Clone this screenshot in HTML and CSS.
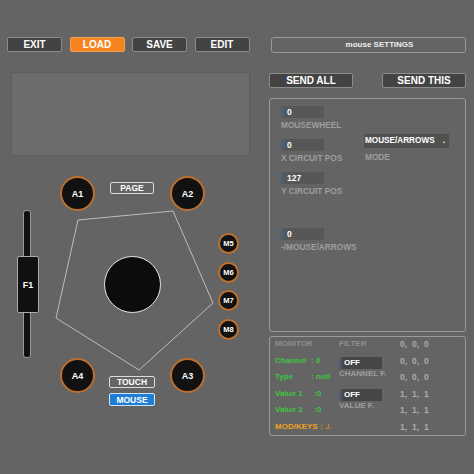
FILE: index.html
```html
<!DOCTYPE html>
<html>
<head>
<meta charset="utf-8">
<link rel="stylesheet" href="styles.css">
</head>
<body>
<div class="page">
  <div class="toolbar">
    <div class="tbtn">EXIT</div>
    <div class="tbtn active">LOAD</div>
    <div class="tbtn">SAVE</div>
    <div class="tbtn">EDIT</div>
  </div>
  <div class="title-box">mouse SETTiNGS</div>

  <div class="left">
    <div class="display"></div>
    <div class="pad">
      <svg class="shape" width="243" height="260" viewBox="0 0 243 260">
        <polygon points="71,65 166,56 206,148 132,215 49,163" fill="none" stroke="#bdbdbd" stroke-width="1"/>
      </svg>
      <div class="track"></div>
      <div class="cap">F1</div>
      <div class="knob a1">A1</div>
      <div class="knob a2">A2</div>
      <div class="knob a4">A4</div>
      <div class="knob a3">A3</div>
      <div class="pill page-btn">PAGE</div>
      <div class="pill touch-btn">TOUCH</div>
      <div class="pill blue mouse-btn">MOUSE</div>
      <div class="stick"></div>
      <div class="mini m5">M5</div>
      <div class="mini m6">M6</div>
      <div class="mini m7">M7</div>
      <div class="mini m8">M8</div>
    </div>
  </div>

  <div class="right">
    <div class="send-row">
      <div class="sbtn">SEND ALL</div>
      <div class="sbtn">SEND THIS</div>
    </div>
    <div class="params">
      <div class="fields">
        <div class="field"><div class="num">0</div><div class="lbl">MOUSEWHEEL</div></div>
        <div class="field"><div class="num">0</div><div class="lbl">X CIRCUIT POS</div></div>
        <div class="field"><div class="num">127</div><div class="lbl">Y CIRCUIT POS</div></div>
        <div class="field far"><div class="num">0</div><div class="lbl">-/MOUSE/ARROWS</div></div>
      </div>
      <div class="mode">
        <div class="select"><span>MOUSE/ARROWS</span><span>.</span></div>
        <div class="lbl">MODE</div>
      </div>
    </div>
    <div class="monitor">
      <div class="mcol">
        <div class="head">MONITOR</div>
        <div class="green"><span class="nm">Channel</span>: 0</div>
        <div class="green"><span class="nm">Type</span>: null</div>
        <div class="green"><span class="nm wide">Value 1</span>:0</div>
        <div class="green"><span class="nm wide">Value 2</span>:0</div>
        <div class="orange">MOD/KEYS <span class="dim">: ./.</span></div>
      </div>
      <div class="fcol">
        <div class="head">FILTER</div>
        <div class="off">OFF</div>
        <div class="flbl">CHANNEL F.</div>
        <div class="off second">OFF</div>
        <div class="flbl">VALUE F.</div>
      </div>
      <div class="vcol">
        <div>0, 0, 0</div>
        <div>0, 0, 0</div>
        <div>0, 0, 0</div>
        <div>1, 1, 1</div>
        <div>1, 1, 1</div>
        <div>1, 1, 1</div>
      </div>
    </div>
  </div>
</div>
</body>
</html>
```
FILE: styles.css
```css
html, body {
  margin: 0;
  padding: 0;
}
body {
  background: #646464;
  font-family: "Liberation Sans", Arial, sans-serif;
  font-weight: bold;
  width: 474px;
  height: 474px;
  overflow: hidden;
}
.page {
  display: grid;
  grid-template-columns: 243px 196px;
  column-gap: 20px;
  padding: 37px 0 0 7px;
}
.toolbar {
  display: flex;
  gap: 7.5px;
}
.tbtn {
  width: 55px;
  height: 15px;
  box-sizing: border-box;
  background: #434343;
  border: 1px solid #8c8c8c;
  border-radius: 2px;
  color: #fff;
  font-size: 10px;
  line-height: 13px;
  text-align: center;
}
.tbtn.active {
  background: #f5841f;
  border-color: #f5a25a;
}
.title-box {
  height: 16px;
  box-sizing: border-box;
  border: 1px solid #9a9a9a;
  border-radius: 3px;
  color: #eee;
  font-size: 8px;
  line-height: 14px;
  text-align: center;
  margin-left: 1px;
  padding-left: 22px;
}

/* left side */
.left {
  padding-top: 20px;
}
.display {
  margin-left: 5px;
  width: 237px;
  height: 82px;
  background: #6c6c6c;
  box-shadow: 0 0 0 1px #5d5d5d;
}
.pad {
  position: relative;
  height: 260px;
}
.shape {
  position: absolute;
  left: 0;
  top: 0;
}
.track {
  position: absolute;
  left: 16px;
  top: 55px;
  width: 8px;
  height: 148px;
  box-sizing: border-box;
  background: #111;
  border: 1px solid #9a9a9a;
  border-radius: 3px;
}
.cap {
  position: absolute;
  left: 10px;
  top: 101px;
  width: 22px;
  height: 57px;
  box-sizing: border-box;
  background: #111;
  border: 1px solid #aaa;
  border-radius: 2px;
  color: #fff;
  font-size: 9px;
  display: flex;
  align-items: center;
  justify-content: center;
}
.knob, .mini {
  position: absolute;
  box-sizing: border-box;
  border-radius: 50%;
  background: #111;
  border: 2px solid #bd6f2e;
  color: #fff;
  display: flex;
  align-items: center;
  justify-content: center;
}
.knob {
  width: 35px;
  height: 35px;
  font-size: 9px;
}
.a1 { left: 53px; top: 21px; }
.a2 { left: 163px; top: 21px; }
.a4 { left: 53px; top: 203px; }
.a3 { left: 163px; top: 203px; }
.mini {
  width: 21px;
  height: 21px;
  font-size: 7.5px;
  left: 211px;
}
.m5 { top: 78px; }
.m6 { top: 107px; }
.m7 { top: 135px; }
.m8 { top: 164px; }
.pill {
  position: absolute;
  box-sizing: border-box;
  border: 1.5px solid #dcdcdc;
  border-radius: 2px;
  color: #fff;
  font-size: 8.5px;
  display: flex;
  align-items: center;
  justify-content: center;
}
.page-btn { left: 103px; top: 27px; width: 44px; height: 12px; }
.touch-btn { left: 102px; top: 221px; width: 46px; height: 12px; }
.mouse-btn { left: 102px; top: 238px; width: 46px; height: 13px; }
.pill.blue {
  background: #1f7fd6;
  border-color: #cfe4f8;
}
.stick {
  position: absolute;
  left: 97px;
  top: 101px;
  width: 57px;
  height: 57px;
  box-sizing: border-box;
  border-radius: 50%;
  background: #0c0c0c;
  border: 1.5px solid #e6e6e6;
}

/* right side */
.right {
  margin-left: -1px;
}
.send-row {
  margin-top: 20px;
  display: flex;
  justify-content: space-between;
}
.sbtn {
  width: 84px;
  height: 15px;
  box-sizing: border-box;
  background: #434343;
  border: 1px solid #8c8c8c;
  border-radius: 2px;
  color: #fff;
  font-size: 10px;
  line-height: 13px;
  text-align: center;
}
.params {
  margin-top: 10px;
  height: 234px;
  box-sizing: border-box;
  border: 1px solid #9a9a9a;
  border-radius: 3px;
  display: flex;
  padding: 7px 0 0 10px;
}
.fields {
  width: 84px;
}
.field {
  margin-bottom: 9px;
}
.field.far {
  margin-top: 32px;
}
.num {
  width: 44px;
  height: 12px;
  box-sizing: border-box;
  padding-left: 7px;
  background: linear-gradient(to right, #4d6680 0, #575757 5px, #575757 100%);
  color: #fff;
  font-size: 8.5px;
  line-height: 12px;
}
.lbl {
  margin-top: 2px;
  padding-left: 1px;
  font-size: 8.3px;
  line-height: 10px;
  color: #9e9e9e;
  white-space: nowrap;
}
.mode {
  padding-top: 28px;
}
.select {
  width: 85px;
  height: 14px;
  box-sizing: border-box;
  padding: 0 4px 0 1px;
  background: #505050;
  color: #fff;
  font-size: 8.2px;
  line-height: 14px;
  display: flex;
  justify-content: space-between;
}
.mode .lbl {
  margin-top: 4px;
}
.monitor {
  margin-top: 4px;
  height: 100px;
  box-sizing: border-box;
  border: 1px solid #9a9a9a;
  border-radius: 3px;
  display: grid;
  grid-template-columns: 64px 61px auto;
  padding-left: 5px;
  font-size: 8px;
  white-space: nowrap;
}
.mcol, .vcol, .fcol .head {
  line-height: 16.6px;
}
.mcol, .vcol, .fcol {
  margin-top: -1px;
}
.head {
  color: #8e8e8e;
}
.green {
  color: #3fc53f;
}
.nm {
  display: inline-block;
  width: 36px;
}
.nm.wide {
  width: 39px;
}
.orange {
  color: #eca21e;
}
.dim {
  color: #d4901c;
}
.off {
  margin-top: 4.4px;
  width: 43px;
  height: 12px;
  box-sizing: border-box;
  padding-left: 5px;
  background: linear-gradient(to right, #4d6680 0, #464646 4px, #464646 100%);
  color: #fff;
  line-height: 12px;
}
.off.second {
  margin-top: 10px;
}
.flbl {
  color: #9e9e9e;
  line-height: 10px;
}
.vcol {
  color: #ababab;
  font-size: 8.5px;
  word-spacing: 2.5px;
}
```
